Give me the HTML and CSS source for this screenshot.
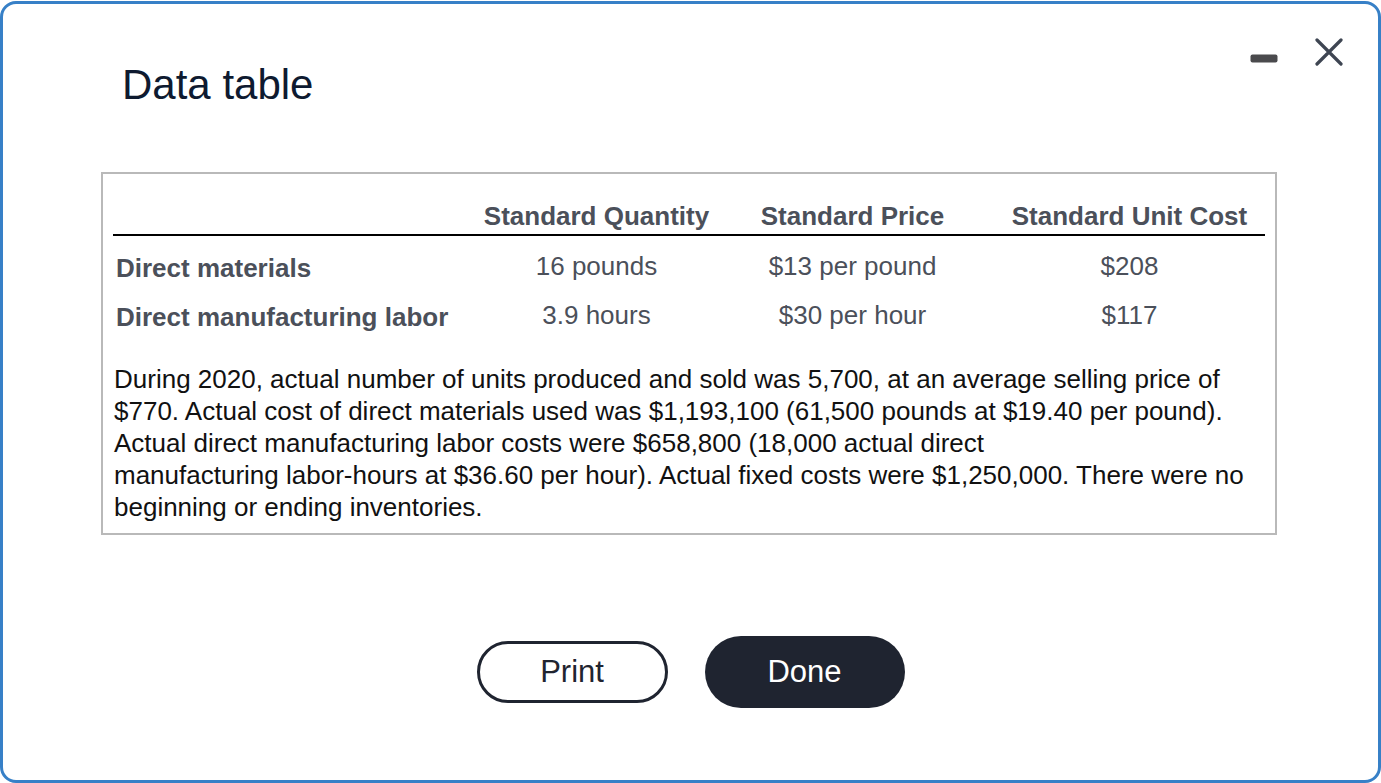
FILE: index.html
```html
<!DOCTYPE html>
<html lang="en">
<head>
<meta charset="utf-8">
<title>Data table</title>
<link rel="stylesheet" href="styles.css">
</head>
<body>
<div class="window">
  <div class="titlebar">
    <h1 class="title">Data table</h1>
    <div class="controls">
      <svg class="icon-min" width="28" height="9" viewBox="0 0 28 9"><rect x="0.5" y="0.5" width="27" height="8" rx="2" fill="#4a4a4d"/></svg>
      <svg class="icon-close" width="28" height="28" viewBox="0 0 28 28"><path d="M2 2 L26 26 M26 2 L2 26" stroke="#3e4552" stroke-width="3.2" stroke-linecap="round" fill="none"/></svg>
    </div>
  </div>
  <div class="box">
    <table class="data">
      <colgroup>
        <col class="c-label"><col class="c-qty"><col class="c-price"><col class="c-cost">
      </colgroup>
      <thead>
        <tr>
          <th class="blank"></th>
          <th>Standard Quantity</th>
          <th>Standard Price</th>
          <th>Standard Unit Cost</th>
        </tr>
      </thead>
      <tbody>
        <tr>
          <td class="label">Direct materials</td>
          <td class="val">16 pounds</td>
          <td class="val">$13 per pound</td>
          <td class="val">$208</td>
        </tr>
        <tr>
          <td class="label">Direct manufacturing labor</td>
          <td class="val">3.9 hours</td>
          <td class="val">$30 per hour</td>
          <td class="val">$117</td>
        </tr>
      </tbody>
    </table>
    <p class="note">During 2020, actual number of units produced and sold was 5,700, at an average selling price of<br>$770. Actual cost of direct materials used was $1,193,100 (61,500 pounds at $19.40 per pound).<br>Actual direct manufacturing labor costs were $658,800 (18,000 actual direct<br>manufacturing labor-hours at $36.60 per hour). Actual fixed costs were $1,250,000. There were no<br>beginning or ending inventories.</p>
  </div>
  <div class="actions">
    <button class="btn btn-print" type="button">Print</button>
    <button class="btn btn-done" type="button">Done</button>
  </div>
</div>
</body>
</html>
```
FILE: styles.css
```css
html, body {
  margin: 0;
  padding: 0;
  background: #ffffff;
}

body {
  font-family: "Liberation Sans", Arial, sans-serif;
}

.window {
  box-sizing: border-box;
  width: 1381px;
  height: 782px;
  margin-top: 1px;
  border: 3px solid #3780c7;
  border-radius: 16px;
  background: #ffffff;
}

.titlebar {
  display: flex;
  justify-content: space-between;
  align-items: flex-start;
  padding: 34px 35px 0 119px;
}

.title {
  margin: 23px 0 0 0;
  font-size: 42px;
  line-height: 48px;
  font-weight: normal;
  color: #0e1a30;
}

.controls {
  display: flex;
  align-items: flex-start;
  gap: 37px;
}

.icon-min {
  display: block;
  margin-top: 16px;
}

.icon-close {
  display: block;
}

.box {
  box-sizing: border-box;
  width: 1176px;
  margin: 63px 0 0 98px;
  border: 2px solid #b9b9b9;
  padding: 18px 10px 10px 10px;
}

.data {
  width: 1152px;
  table-layout: fixed;
  border-collapse: collapse;
  border-spacing: 0;
  font-size: 26px;
  line-height: 30px;
  color: #4b505a;
}

.c-label { width: 369px; }
.c-qty { width: 229px; }
.c-price { width: 283px; }
.c-cost { width: 271px; }

.data th {
  padding: 9px 0 3px 0;
  font-weight: bold;
  text-align: center;
  white-space: nowrap;
  border-bottom: 2px solid #000000;
}

.data td {
  vertical-align: top;
  white-space: nowrap;
}

.data td.label {
  padding: 17px 0 2px 3px;
  font-weight: bold;
  text-align: left;
}

.data td.val {
  padding: 15px 0 4px 0;
  text-align: center;
}

.note {
  margin: 29px 0 0 1px;
  font-size: 26px;
  line-height: 32px;
  color: #111111;
  white-space: nowrap;
}

.actions {
  display: flex;
  justify-content: center;
  align-items: center;
  gap: 37px;
  margin-top: 101px;
}

.btn {
  box-sizing: border-box;
  font-family: "Liberation Sans", Arial, sans-serif;
  font-size: 31px;
  padding: 0;
  cursor: pointer;
}

.btn-print {
  width: 191px;
  height: 62px;
  border: 3px solid #1f2430;
  border-radius: 31px;
  background: #ffffff;
  color: #1f2430;
}

.btn-done {
  width: 200px;
  height: 72px;
  border: none;
  border-radius: 36px;
  background: #1f2430;
  color: #ffffff;
}
```
